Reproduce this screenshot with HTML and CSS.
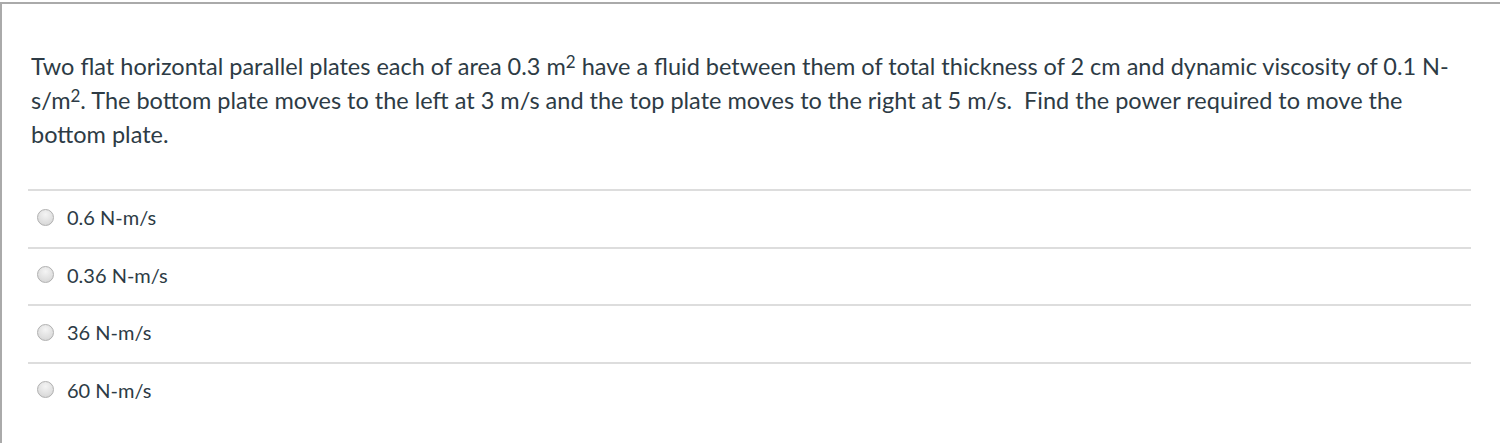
FILE: index.html
```html
<!DOCTYPE html>
<html>
<head>
<meta charset="utf-8">
<link rel="stylesheet" href="styles.css">
</head>
<body>
<div class="question">
  <div class="text">Two flat horizontal parallel plates each of area 0.3 m<sup>2</sup> have a fluid between them of total thickness of 2 cm and dynamic viscosity of 0.1 N-s/m<sup>2</sup>. The bottom plate moves to the left at 3 m/s and the top plate moves to the right at 5 m/s.&nbsp; Find the power required to move the bottom plate.</div>
  <div class="answers">
    <label class="answer"><span class="radio"></span><span class="label">0.6 N-m/s</span></label>
    <label class="answer"><span class="radio"></span><span class="label">0.36 N-m/s</span></label>
    <label class="answer"><span class="radio"></span><span class="label">36 N-m/s</span></label>
    <label class="answer"><span class="radio"></span><span class="label">60 N-m/s</span></label>
  </div>
</div>
</body>
</html>
```

FILE: styles.css
```css
html, body {
  margin: 0;
  padding: 0;
  background: #fff;
}
body {
  font-family: Lato, "Open Sans", sans-serif;
  color: #2d3b45;
  padding-top: 2px;
  height: 443px;
  overflow: hidden;
}
.question {
  border-top: 2px solid #aaaaaa;
  border-left: 2px solid #aaaaaa;
  padding: 45px 29px 0 26px;
  height: 441px;
  box-sizing: border-box;
}
.text {
  font-size: 23.5px;
  line-height: 34px;
  padding-left: 3px;
  padding-bottom: 38px;
}
.text sup {
  font-size: 17px;
  line-height: 0;
  vertical-align: 7px;
}
.answer {
  display: flex;
  align-items: center;
  box-sizing: border-box;
  border-top: 2px solid #dddddd;
  height: 57.5px;
  padding-bottom: 3px;
  font-size: 20px;
}
.radio {
  width: 17px;
  height: 17px;
  border-radius: 50%;
  border: 1px solid #b0b0b0;
  background: radial-gradient(circle at 50% 30%, #f4f4f4 0%, #dedede 65%, #cfcfcf 100%);
  box-sizing: border-box;
  margin-left: 9px;
  margin-right: 13px;
  flex: none;
}
.label {
  line-height: 24px;
}
```
